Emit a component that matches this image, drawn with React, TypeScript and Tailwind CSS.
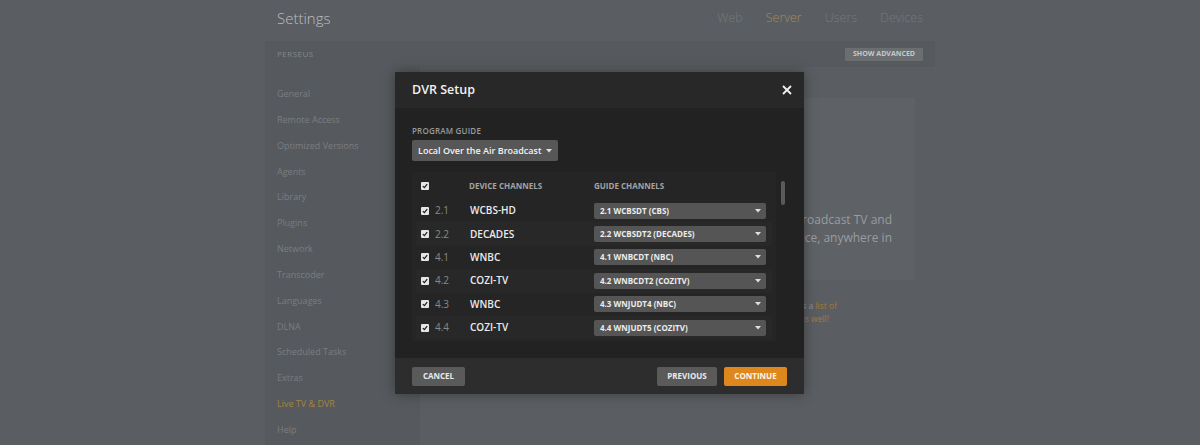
import React from "react";

const sidebar = [
  "General",
  "Remote Access",
  "Optimized Versions",
  "Agents",
  "Library",
  "Plugins",
  "Network",
  "Transcoder",
  "Languages",
  "DLNA",
  "Scheduled Tasks",
  "Extras",
  "Live TV & DVR",
  "Help",
];

const rows = [
  ["2.1", "WCBS-HD", "2.1 WCBSDT (CBS)"],
  ["2.2", "DECADES", "2.2 WCBSDT2 (DECADES)"],
  ["4.1", "WNBC", "4.1 WNBCDT (NBC)"],
  ["4.2", "COZI-TV", "4.2 WNBCDT2 (COZITV)"],
  ["4.3", "WNBC", "4.3 WNJUDT4 (NBC)"],
  ["4.4", "COZI-TV", "4.4 WNJUDT5 (COZITV)"],
];

function Check() {
  return (
    <span className="flex h-[8px] w-[8px] items-center justify-center rounded-[1px] bg-[#e6e6e6]">
      <svg width="6" height="6" viewBox="0 0 6 6">
        <path d="M0.8 3.1 L2.4 4.6 L5.2 1.2" stroke="#1e1e1e" strokeWidth="1.3" fill="none" />
      </svg>
    </span>
  );
}

function Caret({ color = "#e0e0e0" }: { color?: string }) {
  return (
    <svg width="6" height="4" viewBox="0 0 6 4">
      <path d="M0 0 L6 0 L3 3.5 Z" fill={color} />
    </svg>
  );
}

export default function App() {
  return (
    <div
      className="relative h-[445px] w-[1200px] overflow-hidden bg-[#5a5d61]"
      style={{ fontFamily: '"Open Sans", "Noto Sans", sans-serif' }}
    >
      {/* background page (dimmed) */}
      <div className="mx-auto flex h-full w-[670px] flex-col">
        <div className="flex h-[41px] shrink-0 items-center justify-between px-[12px] pb-[4px]">
          <div className="text-[15px] font-light text-[#bdbec0]">Settings</div>
          <div className="flex gap-[23px] text-[12.5px] font-light text-[#76797d]">
            <span>Web</span>
            <span className="text-[#a18f55]">Server</span>
            <span>Users</span>
            <span>Devices</span>
          </div>
        </div>
        <div className="flex h-[26px] shrink-0 items-center justify-between bg-[#56595d] px-[12px]">
          <span className="text-[8px] tracking-[0.5px] text-[#85888b]">PERSEUS</span>
          <span className="flex h-[13px] w-[78px] items-center justify-center bg-[#6b6e71] text-[7px] font-bold text-[#c7c8c9]">
            SHOW ADVANCED
          </span>
        </div>
        <div className="flex min-h-0 flex-1 overflow-hidden bg-[#56595d]">
          <div className="flex w-[155px] shrink-0 flex-col pl-[12px] pt-[21px]">
            {sidebar.map((s) => (
              <div
                key={s}
                className={`h-[25.85px] shrink-0 text-[9px] leading-[12px] ${
                  s === "Live TV & DVR" ? "text-[#a3843f]" : "text-[#7b7e82]"
                }`}
              >
                {s}
              </div>
            ))}
          </div>
          <div className="flex min-w-0 flex-1 flex-col bg-[#5a5d61] pt-[31px]">
            <div className="mx-[20px] flex h-[300px] flex-col">
              <div className="h-[182px] bg-[#5e6165] pt-[113px] text-[12px] leading-[18px] text-[#9a9c9f]">
                <div className="ml-[360px] mr-[23px] flex flex-col items-end [clip-path:inset(0)]">
                  <div className="shrink-0 whitespace-nowrap">Watch and record free over-the-air broadcast TV and</div>
                  <div className="shrink-0 whitespace-nowrap">stream it to any device, anywhere in</div>
                </div>
              </div>
              <div className="ml-[360px] mr-[78px] flex flex-col items-end pt-[19px] text-[8.5px] leading-[13px] text-[#8d8f92] [clip-path:inset(0)]">
                <div className="shrink-0 whitespace-nowrap">
                  Supported tuner devices is a <span className="text-[#a6793f]">list of</span>
                </div>
                <div className="shrink-0 whitespace-nowrap pr-[8px] text-[#a6793f]">antennas as well!</div>
              </div>
            </div>
          </div>
        </div>
      </div>

      {/* modal */}
      <div className="absolute left-[395px] top-[72px] flex h-[322px] w-[409px] flex-col bg-[#222222] shadow-[0_0_12px_rgba(0,0,0,0.35)]">
        <div className="flex h-[36px] items-center justify-between bg-[#282828] pl-[17px] pr-[12px]">
          <span className="text-[12.5px] font-semibold text-[#f2f2f2]">DVR Setup</span>
          <svg width="10" height="10" viewBox="0 0 10 10">
            <path d="M1 1 L9 9 M9 1 L1 9" stroke="#f0f0f0" strokeWidth="1.8" />
          </svg>
        </div>
        <div className="flex flex-1 flex-col pl-[17px] pr-[18px] pt-[18px]">
          <div className="text-[8px] font-semibold leading-[10px] tracking-[0.2px] text-[#9a9a9a]">PROGRAM GUIDE</div>
          <div className="mt-[4px] flex h-[21px] w-[146px] items-center justify-between rounded-[2px] bg-[#575757] pl-[6px] pr-[6px]">
            <span className="whitespace-nowrap text-[9px] font-semibold text-[#f2f2f2]">Local Over the Air Broadcast</span>
            <Caret />
          </div>
          <div className="mt-[11px] flex">
            <div className="h-[170px] w-[364px] overflow-hidden bg-[#252525] px-[4px] pt-[4px]">
              <div className="flex h-[19px] items-center text-[8px] font-bold text-[#a3a3a3]">
                <span className="ml-[5px] w-[48px]">
                  <Check />
                </span>
                <span className="w-[125px]">DEVICE CHANNELS</span>
                <span>GUIDE CHANNELS</span>
              </div>
              <div className="mt-[4px]">
                {rows.map((r, i) => (
                  <div
                    key={r[0]}
                    className={`flex h-[23.4px] items-center ${i % 2 === 0 ? "bg-[#252525]" : "bg-[#282828]"}`}
                  >
                    <span className="ml-[5px] w-[14px]">
                      <Check />
                    </span>
                    <span className="w-[35px] text-[10px] text-[#8a8a8a]">{r[0]}</span>
                    <span className="w-[124px] text-[10px] font-semibold text-[#ececec]">{r[1]}</span>
                    <div className="flex h-[16px] w-[172px] items-center justify-between rounded-[2px] bg-[#555555] pl-[6px] pr-[5px]">
                      <span className="text-[8px] font-bold text-[#ececec]">{r[2]}</span>
                      <Caret />
                    </div>
                  </div>
                ))}
              </div>
            </div>
            <div className="ml-[5px] mt-[9px] h-[24px] w-[4px] rounded-full bg-[#5a5a5a]" />
          </div>
        </div>
        <div className="flex h-[36px] items-center justify-between bg-[#2d2d2d] pl-[17px] pr-[17px]">
          <span className="flex h-[19px] w-[53px] items-center justify-center rounded-[2px] bg-[#5a5a5a] text-[8px] font-bold text-[#eaeaea]">
            CANCEL
          </span>
          <div className="flex gap-[7px]">
            <span className="flex h-[19px] w-[60px] items-center justify-center rounded-[2px] bg-[#5a5a5a] text-[8px] font-bold text-[#eaeaea]">
              PREVIOUS
            </span>
            <span className="flex h-[19px] w-[63px] items-center justify-center rounded-[2px] bg-[#dd871d] text-[8px] font-bold text-[#fff5e6]">
              CONTINUE
            </span>
          </div>
        </div>
      </div>
    </div>
  );
}
